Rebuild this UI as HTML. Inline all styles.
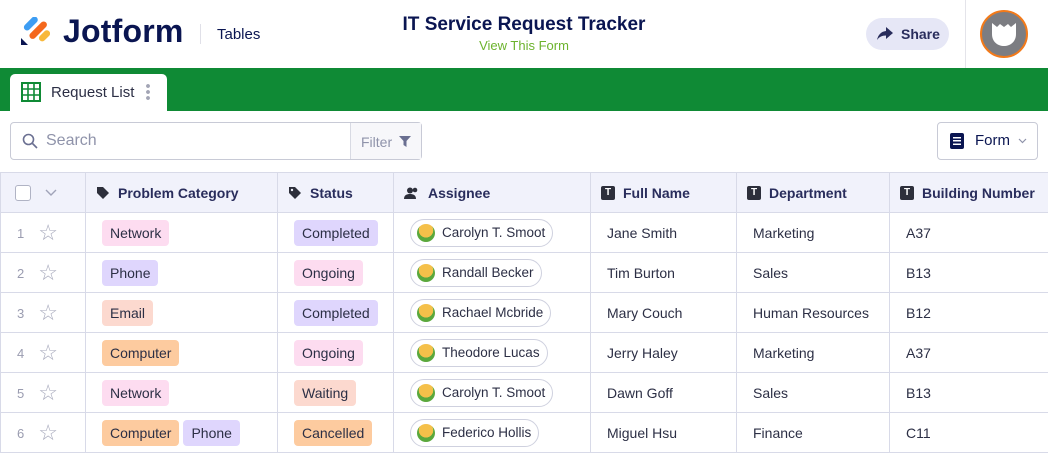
<!DOCTYPE html>
<html><head><meta charset="utf-8"><style>
*{box-sizing:border-box;margin:0;padding:0}
body{width:1048px;height:454px;overflow:hidden;background:#fff;font-family:"Liberation Sans",sans-serif;position:relative;color:#343c6a}
.abs{position:absolute}
.green{left:0;top:68px;width:1048px;height:43px;background:#0f8a35}
.tab{left:10px;top:74px;width:157px;height:37px;background:#fff;border-radius:5px 5px 0 0}
table{position:absolute;left:0;top:172px;border-collapse:collapse;table-layout:fixed;width:1050px}
td,th{border:1px solid #d8dae8;height:40px;font-size:14px;color:#2c2f45;text-align:left;padding:0 0 0 16px;white-space:nowrap;vertical-align:middle}
th{background:#f1f2fb;color:#292d5c;font-weight:bold;font-size:14px;padding-left:10px}
th>div{display:flex;align-items:center}
td.n{color:#9a9cb0;font-size:13px;padding-left:16px}
.tag{display:inline-block;padding:0 8px;height:26px;line-height:26px;border-radius:4px;font-size:14px;color:#2c2f45;margin-right:4px}
.pk{background:#fddcf0}.pu{background:#dfd6fd}.sa{background:#fcd9cf}.or{background:#fdcb9f}
.as{display:inline-flex;align-items:center;height:28px;border:1px solid #cfd1df;border-radius:14px;padding:0 7px 0 6px;font-size:13.5px;color:#2c2f45}
.av{width:18px;height:18px;border-radius:50%;background:radial-gradient(circle at 50% 35%,#f5c04a 48%,#5aa83c 50%);margin-right:7px}
.ic{display:inline-block;width:14px;height:14px;background:#2d2f3b;border-radius:2px;color:#fff;font-size:10px;text-align:center;line-height:14px;margin-right:8px}
.st{margin-left:14px;font-size:22px;color:#a9abbd;vertical-align:-2px}
</style></head><body>
<svg class="abs" style="left:20px;top:17px" width="30" height="30" viewBox="0 0 30 30">
<rect x="8" y="-2" width="6.5" height="17" rx="3.25" fill="#3d9df3" transform="rotate(45 11 6)"/>
<rect x="15" y="2" width="6.5" height="22" rx="3.25" fill="#f4681d" transform="rotate(45 18 13)"/>
<rect x="21" y="12" width="6.5" height="13" rx="3.25" fill="#f8b83b" transform="rotate(45 24 19)"/>
<path d="M1 21 L1 28 L8 28 Z" fill="#0a1551"/>
</svg>
<div class="abs" style="left:63px;top:13px;font-size:32px;font-weight:bold;color:#0a1551;letter-spacing:0.2px">Jotform</div>
<div class="abs" style="left:200px;top:24px;width:1px;height:20px;background:#e0e0e8"></div>
<div class="abs" style="left:217px;top:26px;font-size:15px;color:#0a1551">Tables</div>
<div class="abs" style="left:324px;top:14px;width:400px;text-align:center;font-size:19px;font-weight:bold;color:#0a1551">IT Service Request Tracker</div>
<div class="abs" style="left:324px;top:38px;width:400px;text-align:center;font-size:13px;color:#6cb32d">View This Form</div>
<div class="abs" style="left:866px;top:18px;width:83px;height:32px;border-radius:16px;background:#e6e7f6;font-size:14px;font-weight:bold;color:#292d5c;line-height:32px;padding-left:35px">Share</div>
<svg class="abs" style="left:877px;top:27px" width="16" height="14" viewBox="0 0 16 14"><path d="M9 0 L16 6 L9 12 L9 8.5 C5 8.5 2 10 0 13 C1 8 4 4.5 9 4 Z" fill="#292d5c"/></svg>
<div class="abs" style="left:965px;top:0;width:1px;height:68px;background:#e4e4ea"></div>
<div class="abs" style="left:980px;top:10px;width:48px;height:48px;border-radius:50%;background:#7c7d82;border:2px solid #f27a1a"></div>
<svg class="abs" style="left:988px;top:18px" width="32" height="32" viewBox="0 0 32 32"><path d="M4 5 L9 9 L12 6 L16 9 L20 6 L23 9 L28 5 L28 16 C28 24 22 28 16 28 C10 28 4 24 4 16 Z" fill="#fff"/></svg>
<div class="abs green"></div>
<div class="abs tab"></div>
<svg class="abs" style="left:21px;top:82px" width="20" height="20" viewBox="0 0 20 20"><rect x="1" y="1" width="18" height="18" fill="none" stroke="#0f8a35" stroke-width="2"/><path d="M1 7H19M1 13H19M7 1V19M13 1V19" stroke="#0f8a35" stroke-width="1.6"/></svg>
<div class="abs" style="left:51px;top:84px;font-size:15px;color:#2c2f45">Request List</div>
<div class="abs" style="left:146px;top:83px;width:4px;height:18px;background:radial-gradient(circle,#a3a5b5 1.8px,transparent 2px) 0 0/4px 6px"></div>
<div class="abs" style="left:10px;top:122px;width:412px;height:38px;border:1px solid #c8cad6;border-radius:4px"></div>
<div class="abs" style="left:350px;top:123px;width:71px;height:36px;background:#f7f7fa;border-left:1px solid #d8dae3"></div>
<svg class="abs" style="left:22px;top:133px" width="16" height="16" viewBox="0 0 16 16"><circle cx="6.5" cy="6.5" r="5" fill="none" stroke="#6a6f91" stroke-width="1.6"/><path d="M10.5 10.5L15 15" stroke="#6a6f91" stroke-width="1.6"/></svg>
<div class="abs" style="left:46px;top:132px;font-size:16px;color:#8f93aa">Search</div>
<div class="abs" style="left:361px;top:134px;font-size:14px;color:#8f93aa">Filter</div>
<svg class="abs" style="left:399px;top:136px" width="12" height="11" viewBox="0 0 12 11"><path d="M0 0H12L7.5 5V11L4.5 9V5Z" fill="#6a6f91"/></svg>
<div class="abs" style="left:937px;top:122px;width:101px;height:38px;border:1px solid #c8cad6;border-radius:4px"></div>
<div class="abs" style="left:950px;top:133px;width:14px;height:16px;background:#0a1551;border-radius:2px"></div>
<div class="abs" style="left:953px;top:137px;width:8px;height:8px;background:repeating-linear-gradient(#fff 0 1.5px,transparent 1.5px 3.2px)"></div>
<div class="abs" style="left:975px;top:132px;font-size:15px;color:#0a1551">Form</div>
<svg class="abs" style="left:1018px;top:138px" width="9" height="6" viewBox="0 0 9 6"><path d="M1 1L4.5 4.5L8 1" fill="none" stroke="#8f93aa" stroke-width="1.2"/></svg>
<table>
<colgroup><col style="width:85px"><col style="width:192px"><col style="width:116px"><col style="width:197px"><col style="width:146px"><col style="width:153px"><col style="width:161px"></colgroup>
<tr><th style="padding-left:14px"><div><span style="display:inline-block;width:16px;height:16px;border:1.5px solid #b0b3c4;border-radius:3px;background:#fff"></span><svg style="margin-left:14px" width="12" height="7" viewBox="0 0 12 7"><path d="M1 1L6 6L11 1" fill="none" stroke="#a0a3b8" stroke-width="1.4"/></svg></div></th>
<th><div><svg width="14" height="14" viewBox="0 0 14 14" style="margin-right:8px"><path d="M1 1H7L13 7L7 13L1 7Z" fill="#2d2f3b"/></svg>Problem Category</div></th>
<th><div><svg width="14" height="14" viewBox="0 0 14 14" style="margin-right:8px"><path d="M1 1H7L13 7L7 13L1 7Z" fill="#2d2f3b"/><circle cx="4" cy="4" r="1.2" fill="#f1f2fb"/></svg>Status</div></th>
<th><div><svg width="16" height="12" viewBox="0 0 16 12" style="margin-right:8px"><circle cx="6" cy="3.5" r="3" fill="#2d2f3b"/><path d="M0 12C0 8 3 7 6 7S12 8 12 12Z" fill="#2d2f3b"/><circle cx="11" cy="3" r="2.3" fill="#2d2f3b"/></svg>Assignee</div></th>
<th><div><span class="ic">T</span>Full Name</div></th><th><div><span class="ic">T</span>Department</div></th><th><div><span class="ic">T</span>Building Number</div></th></tr>
<tr><td class="n">1<span class="st">☆</span></td><td><span class="tag pk">Network</span></td><td><span class="tag pu">Completed</span></td><td><span class="as"><span class="av"></span>Carolyn T. Smoot</span></td><td>Jane Smith</td><td>Marketing</td><td>A37</td></tr>
<tr><td class="n">2<span class="st">☆</span></td><td><span class="tag pu">Phone</span></td><td><span class="tag pk">Ongoing</span></td><td><span class="as"><span class="av"></span>Randall Becker</span></td><td>Tim Burton</td><td>Sales</td><td>B13</td></tr>
<tr><td class="n">3<span class="st">☆</span></td><td><span class="tag sa">Email</span></td><td><span class="tag pu">Completed</span></td><td><span class="as"><span class="av"></span>Rachael Mcbride</span></td><td>Mary Couch</td><td>Human Resources</td><td>B12</td></tr>
<tr><td class="n">4<span class="st">☆</span></td><td><span class="tag or">Computer</span></td><td><span class="tag pk">Ongoing</span></td><td><span class="as"><span class="av"></span>Theodore Lucas</span></td><td>Jerry Haley</td><td>Marketing</td><td>A37</td></tr>
<tr><td class="n">5<span class="st">☆</span></td><td><span class="tag pk">Network</span></td><td><span class="tag sa">Waiting</span></td><td><span class="as"><span class="av"></span>Carolyn T. Smoot</span></td><td>Dawn Goff</td><td>Sales</td><td>B13</td></tr>
<tr><td class="n">6<span class="st">☆</span></td><td><span class="tag or">Computer</span><span class="tag pu">Phone</span></td><td><span class="tag or">Cancelled</span></td><td><span class="as"><span class="av"></span>Federico Hollis</span></td><td>Miguel Hsu</td><td>Finance</td><td>C11</td></tr>
</table>
</body></html>
